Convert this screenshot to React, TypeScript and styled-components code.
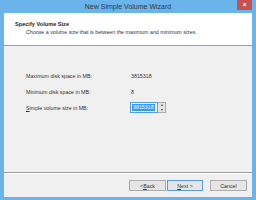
import styled, { createGlobalStyle } from "styled-components";

const GlobalStyle = createGlobalStyle`
  html, body {
    margin: 0;
    padding: 0;
    background: #ffffff;
  }
  * {
    box-sizing: border-box;
  }
`;

const Frame = styled.div`
  width: 256px;
  height: 200px;
  background: #6bb3eb;
  padding: 0 4px 3px;
  display: flex;
  flex-direction: column;
  font-family: "Liberation Sans", Arial, sans-serif;
  color: #1e1e1e;
`;

const TitleBar = styled.div`
  height: 13px;
  display: grid;
  grid-template-columns: 1fr auto 1fr;
  align-items: center;
`;

const Title = styled.span`
  grid-column: 2;
  font-size: 7px;
  color: #2b3a4a;
  line-height: 13px;
`;

const CloseButton = styled.div`
  grid-column: 3;
  justify-self: end;
  align-self: start;
  width: 15px;
  height: 10px;
  background: #c75050;
  color: #ffffff;
  font-size: 7px;
  font-weight: bold;
  line-height: 10px;
  text-align: center;
`;

const Client = styled.div`
  flex: 1;
  background: #f0f0f0;
  display: flex;
  flex-direction: column;
`;

const Header = styled.div`
  height: 33px;
  background: #ffffff;
  border-bottom: 1px solid #a0a0a0;
  padding: 7px 0 0 11px;
`;

const HeaderTitle = styled.div`
  font-size: 5.6px;
  font-weight: bold;
  line-height: 8px;
`;

const HeaderText = styled.div`
  font-size: 5.3px;
  line-height: 8px;
  padding-left: 11px;
  color: #333333;
`;

const Body = styled.div`
  flex: 1;
  padding: 24px 0 0 22px;
`;

const FieldGrid = styled.div`
  display: grid;
  grid-template-columns: 104px auto;
  grid-auto-rows: 11px;
  row-gap: 5px;
  align-items: center;
  font-size: 5.3px;
  color: #333333;
`;

const Value = styled.span`
  padding-left: 1px;
`;

const Spinner = styled.div`
  display: flex;
  height: 11px;
`;

const SpinInput = styled.div`
  width: 28px;
  height: 11px;
  background: #ffffff;
  border: 1px solid #569de5;
  padding: 1px;
  display: flex;
  align-items: center;
`;

const Selected = styled.span`
  background: #3399ff;
  color: #ffffff;
  line-height: 7px;
  padding: 0 1px;
`;

const SpinButtons = styled.div`
  width: 8px;
  display: flex;
  flex-direction: column;
  border: 1px solid #acacac;
  border-left: none;
  background: #e5e5e5;
`;

const SpinArrow = styled.div<{ $up?: boolean }>`
  flex: 1;
  display: flex;
  align-items: center;
  justify-content: center;
  &::after {
    content: "";
    border-left: 1.5px solid transparent;
    border-right: 1.5px solid transparent;
    ${(p) =>
      p.$up
        ? "border-bottom: 2px solid #404040;"
        : "border-top: 2px solid #404040;"}
  }
`;

const Divider = styled.div`
  height: 2px;
  border-top: 1px solid #a0a0a0;
  border-bottom: 1px solid #ffffff;
`;

const ButtonRow = styled.div`
  height: 23px;
  display: flex;
  justify-content: flex-end;
  align-items: flex-start;
  padding: 6px 5px 0 0;
`;

const Button = styled.div<{ $default?: boolean; $gap?: number }>`
  width: ${(p) => (p.$default ? 36 : 37)}px;
  height: 11px;
  margin-left: ${(p) => p.$gap ?? 0}px;
  border: 1px solid ${(p) => (p.$default ? "#569de5" : "#acacac")};
  background: #e5e5e5;
  font-size: 5.3px;
  color: #333333;
  display: flex;
  align-items: center;
  justify-content: center;
  u {
    text-decoration: underline;
  }
`;

export default function App() {
  return (
    <>
      <GlobalStyle />
      <Frame>
        <TitleBar>
          <Title>New Simple Volume Wizard</Title>
          <CloseButton>×</CloseButton>
        </TitleBar>
        <Client>
          <Header>
            <HeaderTitle>Specify Volume Size</HeaderTitle>
            <HeaderText>
              Choose a volume size that is between the maximum and minimum sizes.
            </HeaderText>
          </Header>
          <Body>
            <FieldGrid>
              <span>Maximum disk space in MB:</span>
              <Value>3815318</Value>
              <span>Minimum disk space in MB:</span>
              <Value>8</Value>
              <span>
                <u>S</u>imple volume size in MB:
              </span>
              <Spinner>
                <SpinInput>
                  <Selected>3815318</Selected>
                </SpinInput>
                <SpinButtons>
                  <SpinArrow $up />
                  <SpinArrow />
                </SpinButtons>
              </Spinner>
            </FieldGrid>
          </Body>
          <Divider />
          <ButtonRow>
            <Button>
              &lt; <u>B</u>ack
            </Button>
            <Button $default $gap={1}>
              <u>N</u>ext &gt;
            </Button>
            <Button $gap={7}>Cancel</Button>
          </ButtonRow>
        </Client>
      </Frame>
    </>
  );
}
